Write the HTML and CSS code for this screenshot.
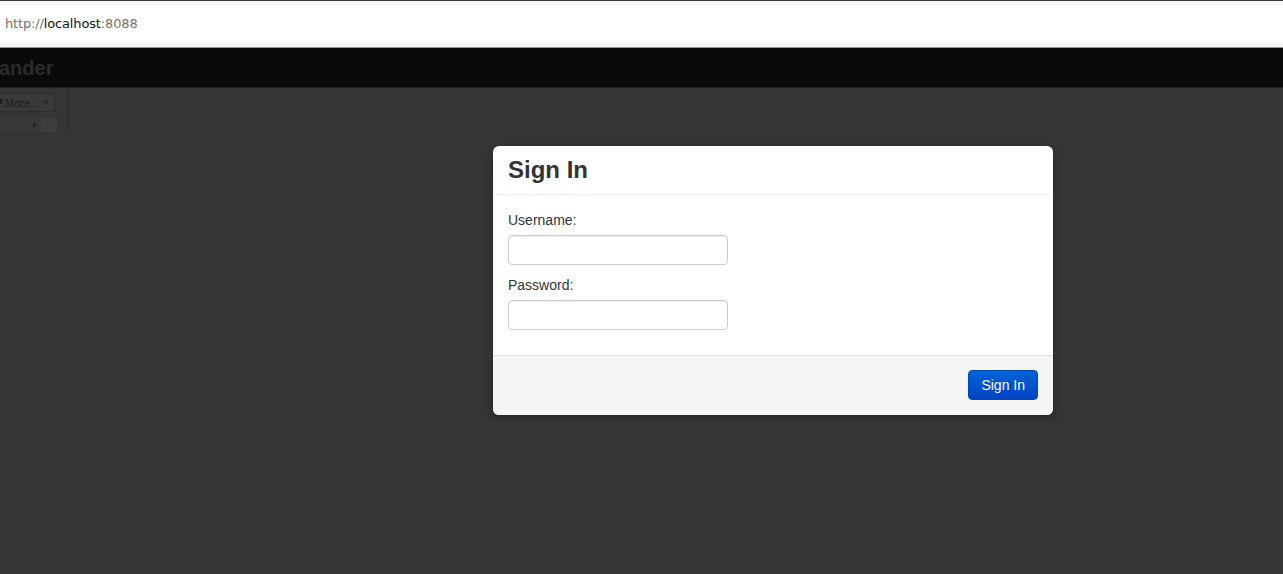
FILE: index.html
```html
<!DOCTYPE html>
<html lang="en">
<head>
    <meta charset="UTF-8">
    <title>Sign In</title>
    <link rel="stylesheet" href="styles.css">
</head>
<body>

    <!-- Barra de dirección -->
    <div class="urlbar">
        <div class="urlfield">
            <span class="dim">http://</span>localhost<span class="dim">:8088</span>
        </div>
    </div>

    <div class="navbar">
        <span class="brand">ander</span>
    </div>

    <div class="page">
        <div class="sidebar">
            <div class="more-btn">
                <span class="icon-bit"></span>More... <span class="caret"></span>
            </div>
            <div class="tree-row">
                <span class="arrow"></span>
                <span class="box"></span>
            </div>
        </div>
        <div class="divider"></div>
    </div>

    <!-- Ventana de inicio de sesión -->
    <div class="modal">
        <div class="modal-header">
            <h3>Sign In</h3>
        </div>
        <form class="modal-body" onsubmit="return false">
            <label for="username">Username:</label>
            <input type="text" id="username">
            <label for="password">Password:</label>
            <input type="password" id="password">
        </form>
        <div class="modal-footer">
            <button class="btn-primary">Sign In</button>
        </div>
    </div>

</body>
</html>
```

FILE: styles.css
```css
html, body {
    margin: 0;
    height: 100%;
}
body {
    background-color: #353535;
    font-family: "Liberation Sans", Arial, sans-serif;
    font-size: 14px;
    line-height: 20px;
    color: #333;
    overflow: hidden;
}
.urlbar {
    border-top: 1px solid #3c3c3c;
    border-bottom: 1px solid #9a9a9a;
    background: #f6f6f6;
    padding: 5px 0;
    box-sizing: border-box;
    height: 48px;
}
.urlfield {
    height: 36px;
    background: #fff;
    padding-left: 5px;
    font-family: "DejaVu Sans", sans-serif;
    font-size: 13px;
    line-height: 36px;
    letter-spacing: -0.15px;
    color: #111;
}
.urlfield .dim {
    color: #7a6f66;
}
.navbar {
    height: 40px;
    background: #0a0a0a;
    border-bottom: 1px solid #1e1e1e;
    box-sizing: border-box;
}
.brand {
    display: inline-block;
    margin-left: -1px;
    font-size: 20px;
    font-weight: bold;
    line-height: 40px;
    color: #2b2b2b;
}
.page {
    display: flex;
}
.sidebar {
    width: 67px;
    padding-top: 5px;
}
.more-btn {
    display: flex;
    align-items: center;
    width: 55px;
    height: 19px;
    box-sizing: border-box;
    background: #393939;
    border: 1px solid #2c2c2c;
    border-left: none;
    border-radius: 0 3px 3px 0;
    font-size: 11px;
    color: #1c1c1c;
    white-space: nowrap;
    overflow: hidden;
}
.icon-bit {
    width: 2px;
    height: 5px;
    background: #1c1c1c;
    margin: -3px 3px 0 0;
}
.caret {
    display: inline-block;
    margin-left: 3px;
    border-left: 4px solid transparent;
    border-right: 4px solid transparent;
    border-top: 4px solid #2a2a2a;
}
.tree-row {
    display: flex;
    align-items: center;
    justify-content: flex-end;
    width: 57px;
    height: 14px;
    margin-top: 6px;
    background: #383838;
}
.arrow {
    border-top: 3px solid transparent;
    border-bottom: 3px solid transparent;
    border-left: 4px solid #232323;
    margin-right: 4px;
}
.box {
    width: 16px;
    height: 14px;
    background: #3d3d3d;
}
.divider {
    width: 1px;
    height: 44px;
    background: #2c2c2c;
}
.modal {
    position: absolute;
    top: 146px;
    left: 493px;
    width: 560px;
    background: #fff;
    border-radius: 6px;
    box-shadow: 0 3px 7px rgba(0, 0, 0, 0.3);
    overflow: hidden;
}
.modal-header {
    padding: 9px 15px;
    border-bottom: 1px solid #eee;
}
.modal-header h3 {
    margin: 0;
    font-size: 24px;
    line-height: 30px;
    font-weight: bold;
    color: #333;
}
.modal-body {
    display: flex;
    flex-direction: column;
    align-items: flex-start;
    padding: 15px;
    margin: 0;
}
.modal-body label {
    margin-bottom: 5px;
}
.modal-body input {
    width: 220px;
    height: 30px;
    box-sizing: border-box;
    padding: 4px 6px;
    margin-bottom: 10px;
    border: 1px solid #ccc;
    border-radius: 4px;
    box-shadow: inset 0 1px 1px rgba(0, 0, 0, 0.075);
    font-family: inherit;
    font-size: 14px;
}
.modal-footer {
    display: flex;
    justify-content: flex-end;
    padding: 14px 15px 15px;
    background: #f5f5f5;
    border-top: 1px solid #ddd;
}
.btn-primary {
    height: 30px;
    padding: 4px 12px;
    font-family: inherit;
    font-size: 14px;
    line-height: 20px;
    color: #fff;
    background: linear-gradient(to bottom, #0064d8, #0044c4);
    border: 1px solid #0048b8;
    border-radius: 4px;
    text-shadow: 0 -1px 0 rgba(0, 0, 0, 0.25);
    cursor: pointer;
}
```
